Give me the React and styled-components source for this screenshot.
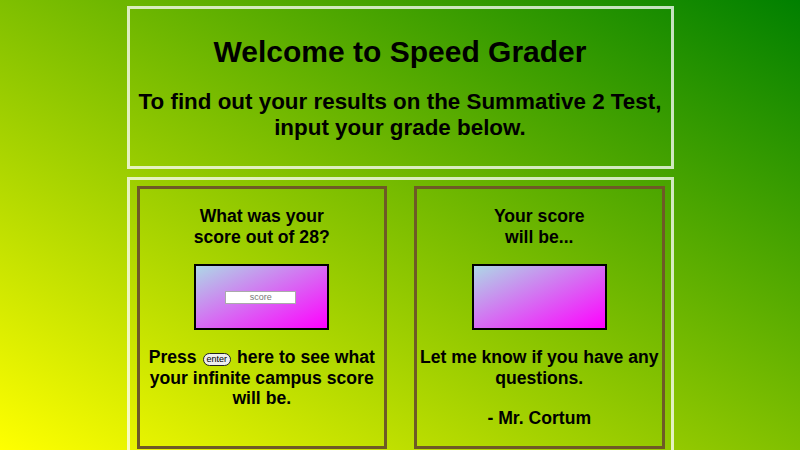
import React from "react";
import styled, { createGlobalStyle } from "styled-components";

const Global = createGlobalStyle`
  html, body { margin: 0; padding: 0; }
  html {
    background: linear-gradient(to top right, #ffff00, #008000) fixed;
    min-height: 100%;
  }
  body {
    font-family: "Liberation Sans", Arial, sans-serif;
    color: #000;
    height: 450px;
    overflow: hidden;
  }
`;

const Page = styled.div`
  display: flex;
  flex-direction: column;
  align-items: center;
  gap: 8px;
  padding-top: 6px;
`;

const Panel = styled.section`
  box-sizing: border-box;
  width: 547px;
  border: 3px solid rgba(255, 255, 255, 0.75);
  text-align: center;
`;

const Header = styled(Panel)`
  height: 163px;
  padding-top: 26px;
`;

const Title = styled.h1`
  margin: 0 0 20px;
  font-size: 30px;
  line-height: 34px;
  font-weight: bold;
`;

const Subtitle = styled.h2`
  margin: 0;
  font-size: 22.4px;
  line-height: 26px;
  font-weight: bold;
`;

const Body = styled(Panel)`
  display: flex;
  gap: 27px;
  padding: 6px 6px 0 7px;
  height: 300px;
`;

const Card = styled.div`
  box-sizing: border-box;
  width: 251px;
  height: 263px;
  border: 3px solid #6e5a26;
  display: flex;
  flex-direction: column;
  align-items: center;
  padding-top: 17px;
  font-size: 17.6px;
  line-height: 20.5px;
  font-weight: bold;
`;

const Question = styled.div`
  margin-bottom: 17px;
`;

const ScoreBox = styled.div`
  box-sizing: border-box;
  width: 135px;
  height: 66px;
  border: 2px solid #000;
  background: linear-gradient(to bottom right, #add8e6, #ff00ff);
  display: flex;
  align-items: center;
  justify-content: center;
  margin-bottom: 17px;
`;

const ScoreInput = styled.input`
  box-sizing: border-box;
  width: 71px;
  height: 13px;
  padding: 0;
  border: 1px solid #aaa;
  background: #fff;
  font-family: "Liberation Sans", Arial, sans-serif;
  font-size: 9px;
  text-align: center;
  outline: none;
  margin-right: 2px;
  &::placeholder { color: #777; }
`;

const Text = styled.p`
  margin: 0 0 ${(p) => p.$gap || 0}px;
`;

const EnterButton = styled.button`
  display: inline-block;
  box-sizing: border-box;
  height: 13px;
  padding: 0 3px;
  margin: 0 1px;
  border: 1px solid #222;
  border-radius: 7px;
  background: #eee;
  color: #000;
  font-family: "Liberation Sans", Arial, sans-serif;
  font-size: 9px;
  line-height: 10px;
  vertical-align: 1px;
`;

export default function App() {
  return (
    <>
      <Global />
      <Page>
        <Header>
          <Title>Welcome to Speed Grader</Title>
          <Subtitle>
            To find out your results on the Summative 2 Test,
            <br />
            input your grade below.
          </Subtitle>
        </Header>
        <Body>
          <Card>
            <Question>
              What was your
              <br />
              score out of 28?
            </Question>
            <ScoreBox>
              <ScoreInput placeholder="score" />
            </ScoreBox>
            <Text>
              Press <EnterButton>enter</EnterButton> here to see what
              <br />
              your infinite campus score
              <br />
              will be.
            </Text>
          </Card>
          <Card>
            <Question>
              Your score
              <br />
              will be...
            </Question>
            <ScoreBox />
            <Text $gap={20}>
              Let me know if you have any
              <br />
              questions.
            </Text>
            <Text>- Mr. Cortum</Text>
          </Card>
        </Body>
      </Page>
    </>
  );
}
